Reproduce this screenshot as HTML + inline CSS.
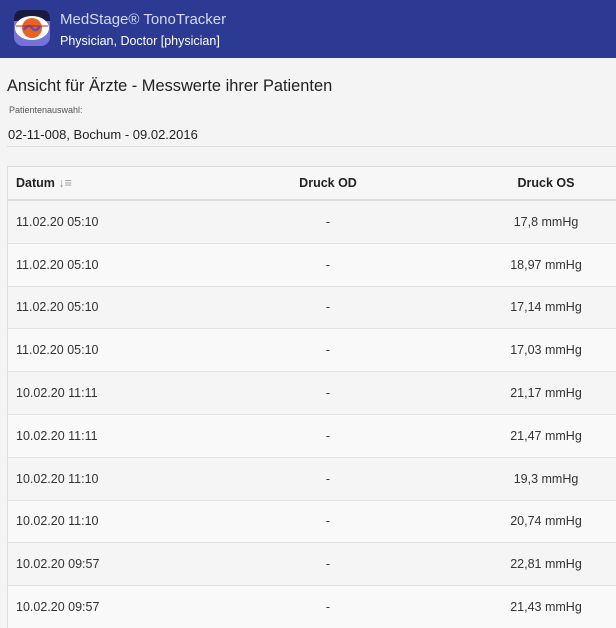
<!DOCTYPE html>
<html><head><meta charset="utf-8"><style>
body{margin:0;width:616px;height:623px;overflow:hidden;background:#f4f4f4;font-family:"Liberation Sans",sans-serif;color:#222}
.hdr{height:58px;background:#2c3a94;position:relative}
.hdr .t1{position:absolute;left:60px;top:11px;color:#d6d9ef;font-size:15px}
.hdr .t2{position:absolute;left:60px;top:34px;color:#fff;font-size:12.5px}
h1{position:absolute;left:7px;top:77px;margin:0;font-weight:normal;font-size:16.4px;color:#222}
.lab{position:absolute;left:9px;top:105px;font-size:9px;color:#555}
.sel{position:absolute;left:8px;top:127px;font-size:13px;color:#222}
.line{position:absolute;left:7px;right:0;top:146px;border-top:1px solid #ddd}
table{position:absolute;left:7px;top:166px;width:650px;border-collapse:collapse;font-size:12.5px;background:#f9f9f9;border-left:1px solid #ddd;border-top:1px solid #ddd}
th{height:32px;padding:0;text-align:center;font-weight:bold;font-size:12.5px;border-bottom:2px solid #ddd;background:#f7f7f7}
td{height:41.8px;text-align:center;border-top:1px solid #e2e2e2;padding:0;color:#333}
td:first-child,th:first-child{text-align:left;padding-left:8px}
tr:nth-child(even) td{background:#f5f5f5}
</style></head><body>
<div class="hdr">
<svg style="position:absolute;left:13px;top:9px" width="38" height="38" viewBox="0 0 38 38">
<rect x="1" y="1" width="36" height="36" rx="9" fill="#7572d8"/>
<path d="M1 10 Q1 1 10 1 H28 Q37 1 37 10 V12 H1Z" fill="#1a1a40"/>
<ellipse cx="19" cy="19" rx="17" ry="12" fill="#fff"/>
<circle cx="19" cy="19" r="10" fill="#e8641f"/>
<path d="M11 21 Q15 14 19 19 Q23 24 27 17" stroke="#5b52c8" stroke-width="2.5" fill="none"/>
<line x1="3" y1="17" x2="35" y2="17" stroke="#d01818" stroke-width="1"/>
</svg>
<div class="t1">MedStage® TonoTracker</div>
<div class="t2">Physician, Doctor [physician]</div>
</div>
<h1>Ansicht für Ärzte - Messwerte ihrer Patienten</h1>
<div class="lab">Patientenauswahl:</div>
<div class="sel">02-11-008, Bochum - 09.02.2016</div>
<div class="line"></div>
<table>
<tr><th style="width:205px">Datum <span style="color:#999;font-weight:normal">↓≡</span></th><th style="width:214px">Druck OD</th><th>Druck OS</th></tr>
<tr><td>11.02.20 05:10</td><td>-</td><td>17,8 mmHg</td></tr>
<tr><td>11.02.20 05:10</td><td>-</td><td>18,97 mmHg</td></tr>
<tr><td>11.02.20 05:10</td><td>-</td><td>17,14 mmHg</td></tr>
<tr><td>11.02.20 05:10</td><td>-</td><td>17,03 mmHg</td></tr>
<tr><td>10.02.20 11:11</td><td>-</td><td>21,17 mmHg</td></tr>
<tr><td>10.02.20 11:11</td><td>-</td><td>21,47 mmHg</td></tr>
<tr><td>10.02.20 11:10</td><td>-</td><td>19,3 mmHg</td></tr>
<tr><td>10.02.20 11:10</td><td>-</td><td>20,74 mmHg</td></tr>
<tr><td>10.02.20 09:57</td><td>-</td><td>22,81 mmHg</td></tr>
<tr><td>10.02.20 09:57</td><td>-</td><td>21,43 mmHg</td></tr>
</table>
</body></html>
